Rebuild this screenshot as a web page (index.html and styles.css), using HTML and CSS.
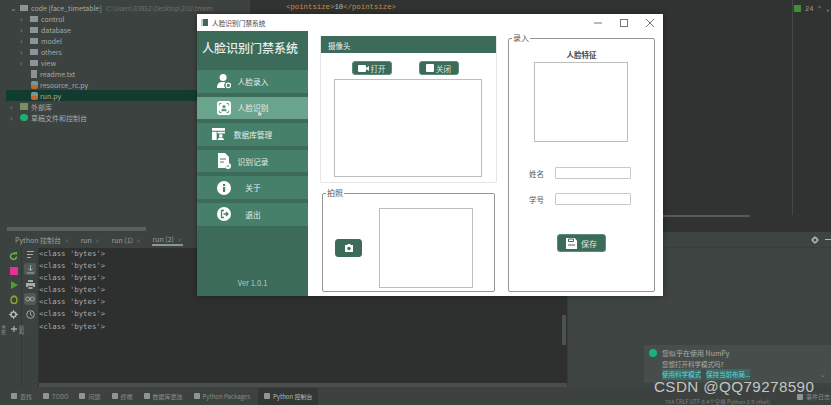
FILE: index.html
```html
<!DOCTYPE html>
<html lang="en">
<head>
    <meta charset="UTF-8">
    <title>人脸识别门禁系统</title>
    <link rel="stylesheet" href="styles.css">
</head>
<body>

<div class="ide">
    <div class="top-area">
        <div class="project">
            <div class="tree-row root"><span class="arrow">⌄</span><span class="folder"></span><b>code [face_timetable]</b> <em>C:\Users\83852\Desktop\202\tmem</em></div>
            <div class="tree-row"><span class="arrow">›</span><span class="folder"></span>control</div>
            <div class="tree-row"><span class="arrow">›</span><span class="folder"></span>database</div>
            <div class="tree-row"><span class="arrow">›</span><span class="folder"></span>model</div>
            <div class="tree-row"><span class="arrow">›</span><span class="folder"></span>others</div>
            <div class="tree-row"><span class="arrow">›</span><span class="folder"></span>view</div>
            <div class="tree-row file"><span class="doc"></span>readme.txt</div>
            <div class="tree-row file"><span class="py"></span>resource_rc.py</div>
            <div class="tree-row file active"><span class="py"></span>run.py</div>
            <div class="tree-row top"><span class="arrow">›</span><span class="lib"></span>外部库</div>
            <div class="tree-row top"><span class="arrow">›</span><span class="lib green"></span>草稿文件和控制台</div>
            <div class="hscroll"></div>
        </div>
        <div class="editor">
            <div class="code"><span class="tag">&lt;pointsize&gt;</span>10<span class="tag">&lt;/pointsize&gt;</span></div>
            <div class="inspect"><span class="check"></span>24 <span class="caret">⌃</span><span class="caret">⌄</span></div>
            <div class="editor-scroll"></div>
        </div>
    </div>

    <div class="bottom-area">
        <div class="console">
            <div class="tabs">
                <span>Python 控制台 <small>×</small></span><span>run <small>×</small></span><span>run (1) <small>×</small></span><span class="on">run (2) <small>×</small></span>
            </div>
            <div class="console-body">
                <div class="tool-col first">
                    <svg width="9" height="9" viewBox="0 0 9 9"><path d="M7.500 4.500a3 3 0 1 1-1-2.300" fill="none" stroke="#6cb33f" stroke-width="1.500"/><path d="M5 0h3v3z" fill="#6cb33f"/></svg>
                    <svg width="8" height="8" viewBox="0 0 8 8"><rect width="8" height="8" fill="#e0349a"/></svg>
                    <svg width="8" height="8" viewBox="0 0 8 8"><path d="M1 0l7 4-7 4z" fill="#4f9e35"/></svg>
                    <svg width="8" height="9" viewBox="0 0 8 9"><ellipse cx="4" cy="5" rx="3" ry="3.500" fill="none" stroke="#86a62e" stroke-width="1.500"/><path d="M2.500 1h3" stroke="#86a62e"/></svg>
                    <svg width="9" height="9" viewBox="0 0 9 9"><circle cx="4.500" cy="4.500" r="2.500" fill="none" stroke="#b4b9b7" stroke-width="1.600"/><path d="M4.500 0v2M4.500 7v2M0 4.500h2M7 4.500h2" stroke="#b4b9b7"/></svg>
                    <svg width="8" height="8" viewBox="0 0 8 8"><path d="M4 1v6M1 4h6" stroke="#a4aaa8" stroke-width="1.300"/></svg>
                </div>
                <div class="tool-col second">
                    <svg width="9" height="9" viewBox="0 0 9 9"><path d="M1 1.500h7M1 4.500h6M1 7.500h4" stroke="#a4aaa8"/></svg>
                    <span class="tool-on"><svg width="9" height="9" viewBox="0 0 9 9"><path d="M4.500 0v5M2.500 3.500l2 2 2-2M1 8h7" fill="none" stroke="#a4aaa8"/></svg></span>
                    <svg width="9" height="9" viewBox="0 0 9 9"><path d="M2 0h5v2H2zM0 3h9v4H7V6H2v1H0zM2.500 7h4v2h-4z" fill="#a4aaa8"/></svg>
                    <span class="tool-on"><svg width="10" height="6" viewBox="0 0 10 6"><circle cx="2.700" cy="3" r="2" fill="none" stroke="#a4aaa8"/><circle cx="7.300" cy="3" r="2" fill="none" stroke="#a4aaa8"/></svg></span>
                    <svg width="9" height="9" viewBox="0 0 9 9"><circle cx="4.500" cy="4.500" r="3.800" fill="none" stroke="#a4aaa8"/><path d="M4.500 2.200v2.500l1.800 1" fill="none" stroke="#a4aaa8"/></svg>
                </div>
                <div class="output">
                    <div>&lt;class 'bytes'&gt;</div>
                    <div>&lt;class 'bytes'&gt;</div>
                    <div>&lt;class 'bytes'&gt;</div>
                    <div>&lt;class 'bytes'&gt;</div>
                    <div>&lt;class 'bytes'&gt;</div>
                    <div>&lt;class 'bytes'&gt;</div>
                    <div>&lt;class 'bytes'&gt;</div>
                    <div class="vscroll"></div>
                </div>
            </div>
        </div>
        <div class="side-panel">
            <div class="side-head">
                <svg width="8" height="8" viewBox="0 0 9 9"><circle cx="4.500" cy="4.500" r="2.500" fill="none" stroke="#b4b9b7" stroke-width="1.600"/><path d="M4.500 0v2M4.500 7v2M0 4.500h2M7 4.500h2" stroke="#b4b9b7"/></svg>
                <span class="side-min"></span>
            </div>
        </div>
    </div>

    <div class="statusbar">
        <span class="st"><i></i>查找</span>
        <span class="st"><i></i>TODO</span>
        <span class="st"><i></i>问题</span>
        <span class="st"><i></i>终端</span>
        <span class="st"><i></i>数据库更改</span>
        <span class="st"><i></i>Python Packages</span>
        <span class="st on"><i></i>Python 控制台</span>
        <span class="st event"><i></i>事件日志</span>
    </div>
</div>

<div class="edge-tabs"><span>结构</span><span>书签</span></div>
<div class="status-line">764 CRLF UTF-8 4个空格 Python 3.9 (dlwl)</div>

<div class="notice">
    <div class="notice-title"><span class="dot"></span>您似乎在使用 NumPy</div>
    <div class="notice-text">您想打开科学模式吗?</div>
    <div class="notice-links"><span>使用科学模式</span><span>保持当前布局...</span></div>
    <span class="notice-caret">⌄</span>
</div>
<div class="watermark">CSDN @QQ79278590</div>

<div class="window">
    <div class="titlebar">
        <span class="app-icon"></span>
        <span class="win-title">人脸识别门禁系统</span>
        <span class="win-btns">
            <svg width="10" height="10" viewBox="0 0 10 10"><path d="M1 5h8" stroke="#777"/></svg>
            <svg width="10" height="10" viewBox="0 0 10 10"><rect x="1.500" y="1.500" width="7" height="7" fill="none" stroke="#777"/></svg>
            <svg width="10" height="10" viewBox="0 0 10 10"><path d="M1 1l8 8M9 1l-8 8" stroke="#777"/></svg>
        </span>
    </div>
    <div class="win-body">
        <div class="menu">
            <div class="menu-title">人脸识别门禁系统</div>
            <div class="menu-item">
                <svg width="14" height="16" viewBox="0 0 16 18"><circle cx="7" cy="5" r="4" fill="#fff"/><path d="M0 17c0-6 3-7 7-7 1.500 0 2.500.2 3 .6A4 4 0 0 0 9.500 17z" fill="#fff"/><circle cx="13" cy="14" r="2.500" fill="none" stroke="#fff" stroke-width="1.300"/></svg>
                <span>人脸录入</span>
            </div>
            <div class="menu-item hover">
                <svg width="14" height="14" viewBox="0 0 15 15"><rect width="15" height="15" rx="3" fill="#fff"/><path d="M2.500 5V2.500H5M10 2.500h2.500V5M2.500 10v2.500H5M10 12.500h2.500V10" fill="none" stroke="#5c9a82"/><circle cx="7.500" cy="6" r="1.700" fill="#5c9a82"/><path d="M4.500 11c0-2 1.500-2.600 3-2.600s3 .6 3 2.600z" fill="#5c9a82"/></svg>
                <span>人脸识别</span>
                <svg class="cursor" width="6" height="8" viewBox="0 0 6 8"><path d="M0 0l5.500 5H3l1.200 2.500-1 .5L2 5.500 0 7z" fill="#d5dad8" stroke="#55665f" stroke-width="0.400"/></svg>
            </div>
            <div class="menu-item wide">
                <svg width="13" height="12" viewBox="0 0 14 13"><path d="M0 0h14v3H0zM0 4h5v9H0zM6 4h8v2H6z" fill="#fff"/><circle cx="9.500" cy="8.500" r="2" fill="#fff"/><path d="M6 13c0-2 1.500-2.500 3.500-2.500S13 11 13 13z" fill="#fff"/></svg>
                <span>数据库管理</span>
            </div>
            <div class="menu-item">
                <svg width="14" height="16" viewBox="0 0 14 16"><path d="M1 0h7l4 4v6a4 4 0 0 0-4 5H1z" fill="#fff"/><path d="M3 6h6M3 9h4" stroke="#47806a"/><circle cx="11" cy="13" r="3" fill="#fff"/><path d="M9.700 13h2.600" stroke="#47806a"/></svg>
                <span>识别记录</span>
            </div>
            <div class="menu-item">
                <svg width="14" height="14" viewBox="0 0 14 14"><circle cx="7" cy="7" r="7" fill="#fff"/><rect x="6" y="6" width="2.200" height="5" fill="#47806a"/><rect x="6" y="3" width="2.200" height="2" fill="#47806a"/></svg>
                <span>关于</span>
            </div>
            <div class="menu-item">
                <svg width="14" height="14" viewBox="0 0 14 14"><circle cx="7" cy="7" r="7" fill="#fff"/><path d="M7 3.500H4.500v7H7" fill="none" stroke="#47806a" stroke-width="1.300"/><path d="M6.500 7h4M9 5l2 2-2 2" fill="none" stroke="#47806a" stroke-width="1.300"/></svg>
                <span>退出</span>
            </div>
            <div class="version">Ver 1.0.1</div>
        </div>

        <div class="middle">
            <div class="camera-card">
                <div class="camera-head">摄像头</div>
                <div class="camera-btns">
                    <button class="btn small"><svg width="11" height="7" viewBox="0 0 11 7"><rect width="8" height="7" rx="1" fill="#fff"/><path d="M8 3l3-2v5L8 4z" fill="#fff"/></svg>打开</button>
                    <button class="btn small"><svg width="8" height="8" viewBox="0 0 8 8"><rect width="8" height="8" rx="1" fill="#fff"/></svg>关闭</button>
                </div>
                <div class="frame camera-frame"></div>
            </div>
            <fieldset class="group photo-group">
                <legend>拍照</legend>
                <button class="btn cam-btn"><svg width="10" height="10" viewBox="0 0 10 10"><path d="M1 2h2l1-1h2l1 1h2v7H1z" fill="#fff"/><circle cx="5" cy="5.500" r="1.700" fill="#3d6b59"/></svg></button>
                <div class="frame photo-frame"></div>
            </fieldset>
        </div>

        <fieldset class="group entry-group">
            <legend>录入</legend>
            <div class="face-label">人脸特征</div>
            <div class="frame face-frame"></div>
            <label class="field name-field">姓名<input type="text"></label>
            <label class="field">学号<input type="text"></label>
            <button class="btn save-btn"><svg width="11" height="11" viewBox="0 0 11 11"><path d="M0 0h8.500L11 2.500V11H0z" fill="#fff"/><path d="M2.500 1h5v2.500h-5zM2 7h7" stroke="#3d6b59" fill="none"/></svg>保存</button>
        </fieldset>
    </div>
</div>

</body>
</html>
```

FILE: styles.css
```css
* {
    box-sizing: border-box;
}
html, body {
    margin: 0;
    height: 100%;
}
body {
    position: relative;
    width: 831px;
    height: 405px;
    overflow: hidden;
    background: #3c4240;
    font-family: "Noto Sans CJK SC", "Noto Sans", sans-serif;
}

/* ide behind the window */
.ide {
    display: flex;
    flex-direction: column;
    height: 405px;
    color: #a4aaa8;
    font-size: 7px;
}
.top-area {
    display: flex;
    height: 232px;
}
.project {
    position: relative;
    width: 250px;
    padding-top: 2px;
    background: #3c4240;
}
.tree-row {
    display: flex;
    align-items: center;
    width: 280px;
    height: 11px;
    padding-left: 20px;
    font-size: 7px;
    white-space: nowrap;
}
.tree-row.root {
    padding-left: 10px;
}
.tree-row b {
    font-weight: 400;
    margin-right: 4px;
}
.tree-row em {
    font-style: normal;
    color: #6b716f;
    font-size: 6.500px;
}
.tree-row.file {
    padding-left: 31px;
}
.tree-row.top {
    padding-left: 10px;
}
.tree-row.active {
    width: 200px;
    background: #123c2f;
    margin-left: 6px;
    padding-left: 25px;
}
.arrow {
    width: 10px;
    font-size: 8px;
    color: #8c9290;
}
.folder {
    width: 8px;
    height: 6px;
    margin-right: 3px;
    background: #8b9496;
}
.doc {
    width: 6px;
    height: 8px;
    margin-right: 3px;
    background: #8d9391;
}
.py {
    width: 7px;
    height: 8px;
    margin-right: 2px;
    background: linear-gradient(#6f9a96 55%, #c8642e 55%);
    border-radius: 2px;
}
.lib {
    width: 8px;
    height: 7px;
    margin-right: 3px;
    background: #7d8f60;
}
.lib.green {
    background: #1fb070;
    border-radius: 4px;
}
.hscroll {
    position: absolute;
    left: 7px;
    bottom: 1px;
    width: 139px;
    height: 4px;
    background: #5a5f5d;
}
.editor {
    position: relative;
    flex: 1;
    background: #313332;
    font-family: "Liberation Mono", monospace;
    font-size: 7.330px;
}
.code {
    padding: 3px 0 0 36px;
    color: #b9bdb9;
}
.tag {
    color: #c88a3c;
}
.inspect {
    position: absolute;
    top: 0;
    left: 542px;
    bottom: 17px;
    width: 39px;
    display: flex;
    align-items: flex-start;
    gap: 4px;
    padding: 5px 0 0 1px;
    border-left: 1px solid #454846;
    font-size: 7px;
    color: #9a9f9d;
}
.check {
    width: 7px;
    height: 7px;
    background: #3f8f33;
}
.caret {
    font-size: 7px;
}
.editor-scroll {
    position: absolute;
    left: 300px;
    bottom: 15px;
    width: 200px;
    height: 2px;
    background: #565a58;
}
.bottom-area {
    display: flex;
    height: 155px;
}
.console {
    display: flex;
    flex-direction: column;
    width: 567px;
}
.tabs {
    display: flex;
    align-items: center;
    gap: 11px;
    height: 16px;
    padding-left: 15px;
    font-size: 7px;
    color: #9ba09e;
}
.tabs span {
    padding-bottom: 1px;
}
.tabs small {
    margin-left: 1px;
    font-size: 6px;
    color: #6b716f;
}
.tabs .on {
    border-bottom: 2px solid #8d9391;
    padding: 0;
}
.console-body {
    display: flex;
    flex: 1;
    min-height: 0;
}
.tool-col {
    display: flex;
    flex-direction: column;
    align-items: center;
    height: 100%;
    border-right: 1px solid #333735;
}
.tool-col.first {
    gap: 6px;
    width: 22px;
    padding: 4px 0 0 6px;
}
.tool-col.second {
    gap: 3px;
    width: 17px;
    padding-top: 0;
}
.tool-on {
    display: flex;
    align-items: center;
    justify-content: center;
    width: 12px;
    height: 12px;
    border-radius: 2px;
    background: #525856;
}
.tool-col.second > svg {
    margin: 1.500px 0;
}
.output {
    position: relative;
    flex: 1;
    padding-top: 0;
    background: #2e302f;
    border-bottom: 4px solid #4a4e4c;
    font-family: "DejaVu Sans Mono", monospace;
    font-size: 7.330px;
    line-height: 12.100px;
    color: #a9adab;
}
.vscroll {
    position: absolute;
    top: 67px;
    right: 1px;
    width: 4px;
    height: 30px;
    background: #4c504e;
}
.side-panel {
    flex: 1;
    background: #3e4441;
    border-left: 1px solid #363a38;
}
.side-head {
    display: flex;
    align-items: center;
    justify-content: flex-end;
    gap: 6px;
    height: 16px;
    border-bottom: 1px solid #393e3c;
}
.side-min {
    width: 6px;
    height: 1px;
    background: #b4b9b7;
}
.statusbar {
    display: flex;
    align-items: center;
    gap: 11px;
    flex: 1;
    padding-left: 11px;
    background: #3d4240;
    font-size: 6px;
    line-height: 7px;
    color: #858b89;
}
.st {
    display: flex;
    align-items: center;
    gap: 3px;
    white-space: nowrap;
}
.st i {
    width: 6px;
    height: 6px;
    border-radius: 1px;
    background: #8f9593;
}
.statusbar .on {
    margin-left: -3px;
    padding: 5px 6px;
    background: #323735;
    color: #b3b8b6;
}
.statusbar .event {
    margin-left: auto;
    margin-right: 1px;
    padding-top: 1px;
}
.edge-tabs {
    position: absolute;
    left: 0;
    top: 325px;
    display: flex;
    flex-direction: column;
    gap: 12px;
    writing-mode: vertical-rl;
    font-size: 5px;
    line-height: 6px;
    color: #8f9593;
}
.status-line {
    position: absolute;
    left: 665px;
    top: 399px;
    white-space: nowrap;
    font-size: 5.500px;
    line-height: 6px;
    color: #7b817f;
}

/* popup bottom right */
.notice {
    position: absolute;
    left: 644px;
    top: 345px;
    width: 187px;
    height: 38px;
    padding: 3px 5px;
    background: #474d4b;
    font-size: 6.500px;
    line-height: 10.500px;
    color: #a9aeac;
}
.notice-title {
    display: flex;
    align-items: center;
    gap: 5px;
    font-size: 7px;
}
.dot {
    width: 8px;
    height: 8px;
    border-radius: 50%;
    background: #14b57a;
}
.notice-text {
    padding-left: 13px;
}
.notice-links {
    display: flex;
    gap: 5px;
    padding-left: 13px;
    color: #6fd0d0;
}
.notice-links span {
    background: rgba(40, 130, 130, 0.55);
}
.notice-caret {
    position: absolute;
    right: 5px;
    bottom: 4px;
    color: #7d8381;
}
.watermark {
    position: absolute;
    left: 654px;
    top: 380px;
    font-family: "Liberation Sans", sans-serif;
    font-size: 15.200px;
    line-height: 14px;
    letter-spacing: 0.4px;
    color: #c4c6c5;
}

/* the app window */
.window {
    position: absolute;
    left: 197px;
    top: 14px;
    width: 466px;
    height: 282px;
    display: flex;
    flex-direction: column;
    background: #fff;
    box-shadow: 0 0 6px rgba(0, 0, 0, 0.35);
}
.titlebar {
    display: flex;
    align-items: center;
    height: 17px;
    padding-left: 4px;
    background: #fff;
    font-size: 6.700px;
    color: #444;
}
.app-icon {
    width: 7px;
    height: 7px;
    margin-right: 4px;
    background: linear-gradient(to right, #ccc 30%, #3d6b59 30%);
}
.win-btns {
    display: flex;
    gap: 16px;
    margin-left: auto;
    padding-right: 8px;
}
.win-body {
    display: flex;
    flex: 1;
    min-height: 0;
}
.menu {
    display: flex;
    flex-direction: column;
    width: 111px;
    background: #3d6b59;
    color: #e6efeb;
    font-size: 7.700px;
}
.menu-title {
    height: 39px;
    padding: 8px 0 0 5px;
    font-size: 12px;
    font-weight: 500;
    white-space: nowrap;
}
.menu-item {
    position: relative;
    display: grid;
    grid-template-columns: 14px 44px;
    align-items: center;
    justify-items: center;
    height: 22.600px;
    margin-bottom: 4px;
    padding-left: 20px;
    background: #47806a;
}
.menu-item.hover {
    background: #6aa48d;
}
.menu-item.wide svg {
    margin-left: -11px;
}
.cursor {
    position: absolute;
    left: 61px;
    top: 13px;
}
.version {
    margin-top: auto;
    padding-bottom: 8px;
    text-align: center;
    font-size: 7.500px;
    color: #b6cdc4;
}
.middle {
    display: flex;
    flex-direction: column;
    width: 200px;
    padding: 5px 0 0 12px;
}
.camera-card {
    flex: none;
    width: 177px;
    height: 147px;
    border: 1px solid #e6e6e6;
    border-top: 0;
    border-radius: 2px;
}
.camera-head {
    height: 17px;
    padding-left: 7px;
    overflow: hidden;
    background: #3d6b59;
    color: #e6efeb;
    font-size: 7.500px;
    line-height: 20px;
}
.camera-btns {
    display: flex;
    justify-content: center;
    gap: 27px;
    padding-top: 8px;
    padding-right: 7px;
}
.btn {
    display: flex;
    align-items: center;
    justify-content: center;
    padding: 0;
    border: 1px solid #5f8a78;
    border-radius: 3px;
    background: #3d6b59;
    color: #dfe9e5;
    font-family: inherit;
}
.btn.small {
    gap: 2px;
    width: 40px;
    height: 14px;
    font-size: 7.500px;
}
.frame {
    flex: none;
    border: 1px solid #bdbdbd;
    background: #fff;
}
.camera-frame {
    width: 148px;
    height: 98px;
    margin: 4px 0 0 13px;
}
.group {
    margin: 0;
    padding: 0;
    border: 1.500px solid #8f9694;
    border-radius: 2px;
}
.group legend {
    margin-left: 3px;
    padding: 0 1px;
    font-size: 8px;
    line-height: 8px;
    color: #555;
}
.photo-group {
    display: flex;
    align-items: center;
    flex: none;
    width: 173px;
    height: 103px;
    margin: 6px 0 0 2px;
    padding: 11px 0 0;
}
.cam-btn {
    width: 27px;
    height: 18px;
    margin: 0 16.500px 2px 12px;
    border-color: #3d6b59;
}
.photo-frame {
    width: 94px;
    height: 80px;
    margin-bottom: 1px;
}
.entry-group {
    display: flex;
    flex-direction: column;
    align-items: flex-start;
    width: 147px;
    height: 258px;
    margin: 3px 0 0 0;
    padding: 0;
}
.face-label {
    align-self: center;
    margin-top: 7px;
    font-size: 7.500px;
    font-weight: 700;
    color: #444;
}
.face-frame {
    width: 94px;
    height: 80px;
    margin: 2px 0 0 25px;
}
.field {
    display: flex;
    align-items: center;
    gap: 11px;
    margin: 14px 0 0 20px;
    font-size: 7.500px;
    color: #555;
}
.name-field {
    margin-top: 25px;
}
.field input {
    width: 76px;
    height: 12px;
    padding: 0;
    border: 1px solid #c8c8c8;
    border-radius: 1px;
}
.save-btn {
    gap: 4px;
    width: 49px;
    height: 18px;
    margin: 29px 0 0 48px;
    font-size: 8px;
}
```
